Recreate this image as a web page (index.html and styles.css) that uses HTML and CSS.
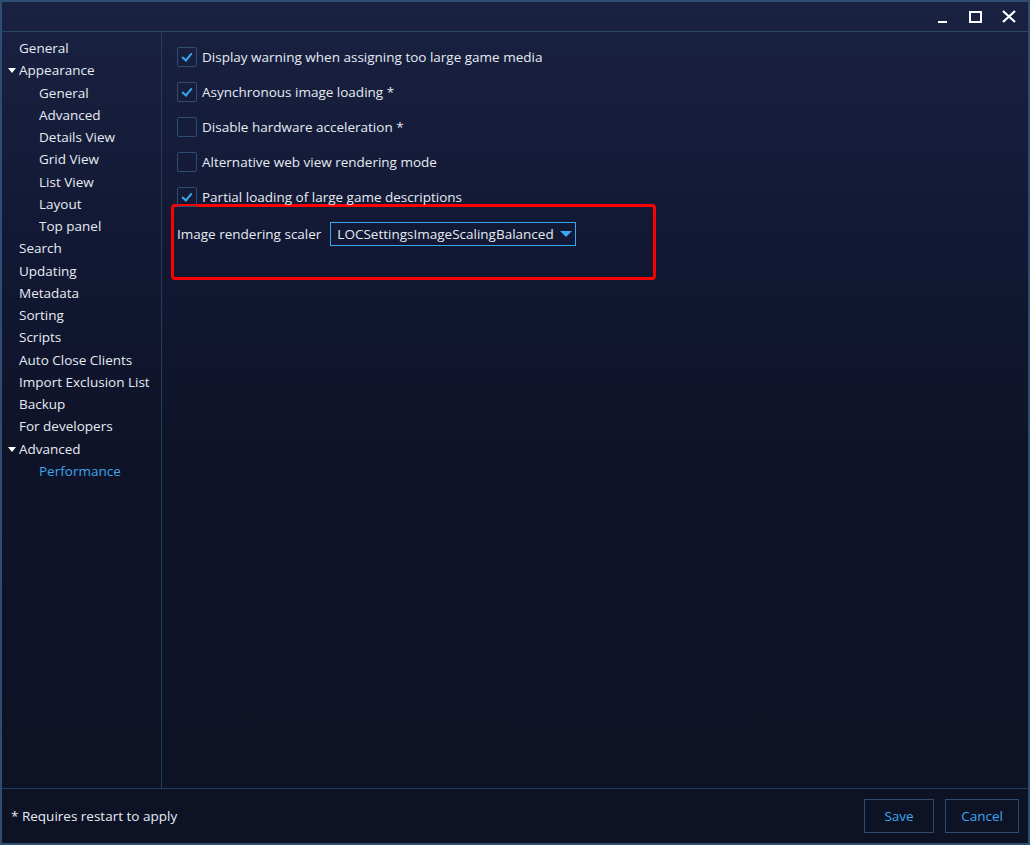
FILE: index.html
```html
<!DOCTYPE html>
<html lang="en">
<head>
    <meta charset="UTF-8">
    <title>Settings</title>
    <link rel="stylesheet" href="styles.css">
</head>
<body>
<div class="window">
    <div class="titlebar">
        <span class="tb-btn tb-min"></span>
        <span class="tb-btn tb-max"></span>
        <span class="tb-btn tb-close">
            <svg width="14" height="13" viewBox="0 0 14 13"><path d="M1 1 L13 12 M13 1 L1 12" stroke="#ffffff" stroke-width="2.2" fill="none"/></svg>
        </span>
    </div>
    <div class="main">
        <div class="sidebar">
            <div class="nav-item">General</div>
            <div class="nav-item open"><span class="caret"></span>Appearance</div>
            <div class="nav-item sub">General</div>
            <div class="nav-item sub">Advanced</div>
            <div class="nav-item sub">Details View</div>
            <div class="nav-item sub">Grid View</div>
            <div class="nav-item sub">List View</div>
            <div class="nav-item sub">Layout</div>
            <div class="nav-item sub">Top panel</div>
            <div class="nav-item">Search</div>
            <div class="nav-item">Updating</div>
            <div class="nav-item">Metadata</div>
            <div class="nav-item">Sorting</div>
            <div class="nav-item">Scripts</div>
            <div class="nav-item">Auto Close Clients</div>
            <div class="nav-item">Import Exclusion List</div>
            <div class="nav-item">Backup</div>
            <div class="nav-item">For developers</div>
            <div class="nav-item open"><span class="caret"></span>Advanced</div>
            <div class="nav-item sub selected">Performance</div>
        </div>
        <div class="content">
            <label class="check-row"><span class="box checked"></span>Display warning when assigning too large game media</label>
            <label class="check-row"><span class="box checked"></span>Asynchronous image loading *</label>
            <label class="check-row"><span class="box"></span>Disable hardware acceleration *</label>
            <label class="check-row"><span class="box"></span>Alternative web view rendering mode</label>
            <label class="check-row"><span class="box checked"></span>Partial loading of large game descriptions</label>
            <div class="highlight">
                <div class="scaler-row">
                    <span>Image rendering scaler</span>
                    <div class="combo">LOCSettingsImageScalingBalanced<span class="combo-arrow"></span></div>
                </div>
            </div>
        </div>
    </div>
    <div class="footer">
        <span class="note">* Requires restart to apply</span>
        <div class="buttons">
            <button class="btn save">Save</button>
            <button class="btn cancel">Cancel</button>
        </div>
    </div>
</div>
</body>
</html>
```

FILE: styles.css
```css
html, body {
    margin: 0;
    padding: 0;
    height: 100%;
}
body {
    font-family: "Open Sans", "DejaVu Sans", sans-serif;
    font-size: 13.5px;
    color: #e6ebf3;
    background: #0d1225;
}
.window {
    box-sizing: border-box;
    height: 845px;
    display: flex;
    flex-direction: column;
    border: 2px solid #2f4d73;
    background: linear-gradient(to bottom, #1a2242 0%, #121833 30%, #0e1327 55%, #0d1225 100%);
}
.titlebar {
    height: 29px;
    border-bottom: 1px solid #2a4566;
    display: flex;
    justify-content: flex-end;
    align-items: center;
    padding-right: 3px;
}
.tb-btn {
    width: 33px;
    height: 29px;
    display: flex;
    align-items: center;
    justify-content: center;
}
.tb-min::before {
    content: "";
    width: 9px;
    height: 2px;
    background: #ffffff;
    margin-top: 10px;
}
.tb-max::before {
    content: "";
    width: 9px;
    height: 8px;
    border: 2px solid #ffffff;
    margin-top: 1px;
}
.main {
    flex: 1;
    display: flex;
    min-height: 0;
}
.sidebar {
    width: 159px;
    border-right: 1px solid #253d5c;
    padding-top: 5px;
}
.nav-item {
    height: 22.25px;
    line-height: 22px;
    padding-left: 17px;
    position: relative;
    white-space: nowrap;
}
.nav-item.sub {
    padding-left: 37px;
}
.nav-item.selected {
    color: #3ea6ee;
}
.caret {
    position: absolute;
    left: 6px;
    top: 9px;
    border-left: 4px solid transparent;
    border-right: 4px solid transparent;
    border-top: 5px solid #ffffff;
}
.content {
    flex: 1;
    padding: 7px 0 0 15px;
}
.check-row {
    display: flex;
    align-items: center;
    height: 35px;
    margin: 0;
}
.box {
    box-sizing: border-box;
    width: 20px;
    height: 20px;
    border: 1px solid #2e4d70;
    border-radius: 2px;
    margin-right: 5px;
    position: relative;
    flex: none;
}
.box.checked::after {
    content: "";
    position: absolute;
    left: 6px;
    top: 3px;
    width: 4px;
    height: 8px;
    border-right: 2.5px solid #3aa8f0;
    border-bottom: 2.5px solid #3aa8f0;
    transform: rotate(40deg);
}
.highlight {
    box-sizing: border-box;
    width: 485px;
    height: 76px;
    margin: -10px 0 0 -6px;
    border: 3px solid #ff0000;
    border-radius: 4px;
    padding: 15px 0 0 3px;
}
.scaler-row {
    display: flex;
    align-items: center;
    gap: 9px;
}
.combo {
    box-sizing: border-box;
    height: 24px;
    width: 246px;
    border: 1px solid #3aa8f0;
    display: flex;
    align-items: center;
    padding-left: 6px;
    white-space: nowrap;
}
.combo-arrow {
    margin-left: 6px;
    border-left: 6px solid transparent;
    border-right: 6px solid transparent;
    border-top: 6px solid #3aa8f0;
}
.footer {
    height: 54px;
    border-top: 1px solid #253d5c;
    display: flex;
    align-items: center;
    justify-content: space-between;
    padding: 0 9px 0 9px;
}
.buttons {
    display: flex;
    gap: 11px;
}
.btn {
    font-family: inherit;
    font-size: 13.5px;
    color: #3ea6ee;
    background: transparent;
    border: 1px solid #2e4d70;
    height: 34px;
    padding: 0;
    cursor: pointer;
}
.save {
    width: 70px;
}
.cancel {
    width: 74px;
}
```
